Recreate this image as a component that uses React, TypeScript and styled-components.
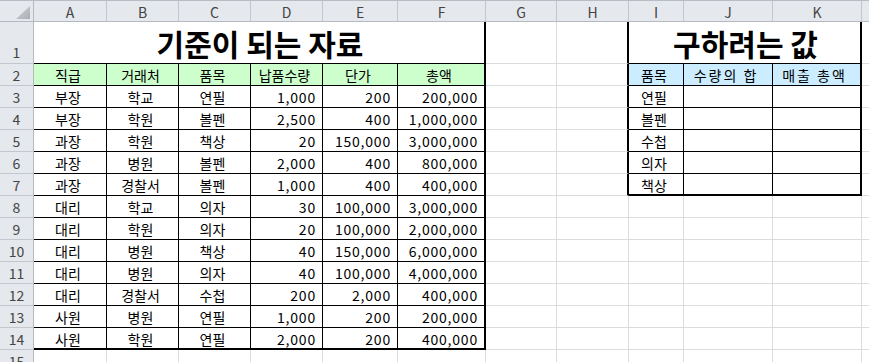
import React from "react";
import styled, { createGlobalStyle } from "styled-components";

const GlobalStyle = createGlobalStyle`
  html, body {
    margin: 0;
    padding: 0;
    background: #ffffff;
    overflow: hidden;
  }
  body {
    font-family: "Noto Sans CJK KR", "Noto Sans", sans-serif;
  }
`;

type Edge = "grid" | "thin" | "thick";
type Align = "left" | "center" | "right";

const edge = (e: Edge) =>
  e === "thick" ? "2px solid #000" : e === "thin" ? "1px solid #000" : "1px solid #dadcdd";

const Frame = styled.div`
  width: 869px;
  height: 362px;
  overflow: hidden;
  display: flex;
  flex-direction: column;
`;

const TopStrip = styled.div`
  height: 3px;
  box-sizing: border-box;
  background: #d3d6da;
  border-bottom: 1px solid #b9bdc3;
`;

const Sheet = styled.div`
  display: grid;
  grid-template-columns: 34px 73px 72px 72px 72px 75px 88px 71px 72px 55px 89px 89px 1fr;
  grid-template-rows: 21px 42px repeat(14, 22px);
`;

const Corner = styled.div`
  box-sizing: border-box;
  background: #e5e8ec;
  border-right: 1px solid #b4b9c0;
  border-bottom: 1px solid #b4b9c0;
  display: flex;
  align-items: flex-end;
  justify-content: flex-end;
  padding: 0 3px 2px 0;
`;

const ColHead = styled.div`
  box-sizing: border-box;
  background: #e5e8ec;
  border-right: 1px solid #c3c7cd;
  border-bottom: 1px solid #b4b9c0;
  display: flex;
  align-items: center;
  justify-content: center;
  font-size: 14px;
  line-height: 1;
  color: #444;
  padding-top: 1px;
`;

const RowHead = styled.div<{ $tall?: boolean }>`
  box-sizing: border-box;
  background: #e5e8ec;
  border-right: 1px solid #b4b9c0;
  border-bottom: 1px solid #c3c7cd;
  display: flex;
  align-items: ${(p) => (p.$tall ? "flex-end" : "center")};
  justify-content: center;
  padding-bottom: ${(p) => (p.$tall ? "4px" : "0")};
  font-size: 14px;
  line-height: 1;
  color: #444;
`;

const Cell = styled.div<{
  $right: Edge;
  $bottom: Edge;
  $fill?: string;
  $align?: Align;
  $span?: number;
  $numeric?: boolean;
  $spaced?: boolean;
}>`
  box-sizing: border-box;
  grid-column: span ${(p) => p.$span ?? 1};
  border-right: ${(p) => edge(p.$right)};
  border-bottom: ${(p) => edge(p.$bottom)};
  background: ${(p) => p.$fill ?? "#ffffff"};
  display: flex;
  align-items: center;
  justify-content: ${(p) =>
    p.$align === "right" ? "flex-end" : p.$align === "left" ? "flex-start" : "center"};
  padding: 1px ${(p) => (p.$numeric ? "6px" : "7px")} 0 3px;
  font-size: 14px;
  line-height: 1;
  letter-spacing: ${(p) => (p.$numeric ? "0.8px" : p.$spaced ? "2px" : "0")};
  color: #000;
  white-space: nowrap;
  overflow: hidden;
`;

const TitleCell = styled(Cell)`
  font-size: 30px;
  font-weight: 700;
  padding: 0 0 0 2px;
  letter-spacing: 0;
`;

const CornerMark = () => (
  <svg width="14" height="13" viewBox="0 0 14 13">
    <defs>
      <linearGradient id="cm" x1="0" y1="0" x2="1" y2="1">
        <stop offset="0" stopColor="#d2d5d9" />
        <stop offset="1" stopColor="#a9adb3" />
      </linearGradient>
    </defs>
    <polygon points="14,0 14,13 0,13" fill="url(#cm)" />
  </svg>
);

const LETTERS = ["A", "B", "C", "D", "E", "F", "G", "H", "I", "J", "K", ""];

const GREEN = "#ccffcc";
const BLUE = "#ccecff";

const leftHeader = ["직급", "거래처", "품목", "납품수량", "단가", "총액"];
const leftData: string[][] = [
  ["부장", "학교", "연필", "1,000", "200", "200,000"],
  ["부장", "학원", "볼펜", "2,500", "400", "1,000,000"],
  ["과장", "학원", "책상", "20", "150,000", "3,000,000"],
  ["과장", "병원", "볼펜", "2,000", "400", "800,000"],
  ["과장", "경찰서", "볼펜", "1,000", "400", "400,000"],
  ["대리", "학교", "의자", "30", "100,000", "3,000,000"],
  ["대리", "학원", "의자", "20", "100,000", "2,000,000"],
  ["대리", "병원", "책상", "40", "150,000", "6,000,000"],
  ["대리", "병원", "의자", "40", "100,000", "4,000,000"],
  ["대리", "경찰서", "수첩", "200", "2,000", "400,000"],
  ["사원", "병원", "연필", "1,000", "200", "200,000"],
  ["사원", "학원", "연필", "2,000", "200", "400,000"],
];
const rightHeader = ["품목", "수량의 합", "매출 총액"];
const rightItems = ["연필", "볼펜", "수첩", "의자", "책상"];

// border rules for row r (1-based), column c (1..12)
const rightEdge = (r: number, c: number): Edge => {
  if (c >= 1 && c <= 6 && r <= 14) return c === 6 ? "thick" : "thin";
  if (c === 8 && r <= 7) return "thick";
  if (c >= 9 && c <= 11 && r <= 7) return c === 11 ? "thick" : "thin";
  return "grid";
};
const bottomEdge = (r: number, c: number): Edge => {
  if (c >= 1 && c <= 6 && r <= 14) return r === 14 ? "thick" : "thin";
  if (c >= 9 && c <= 11 && r <= 7) return r === 7 ? "thick" : "thin";
  return "grid";
};

type Content = { text: string; align: Align; fill?: string; numeric?: boolean; spaced?: boolean };

const cellContent = (r: number, c: number): Content => {
  if (r === 2 && c <= 6) return { text: leftHeader[c - 1], align: "center", fill: GREEN };
  if (r >= 3 && r <= 14 && c <= 6) {
    const v = leftData[r - 3][c - 1];
    return c >= 4 ? { text: v, align: "right", numeric: true } : { text: v, align: "center" };
  }
  if (r === 2 && c >= 9 && c <= 11)
    return { text: rightHeader[c - 9], align: "center", fill: BLUE, spaced: c > 9 };
  if (r >= 3 && r <= 7 && c === 9) return { text: rightItems[r - 3], align: "center" };
  return { text: "", align: "center" };
};

export default function App() {
  const rows: React.ReactNode[] = [];

  rows.push(
    <Corner key="corner">
      <CornerMark />
    </Corner>
  );
  LETTERS.forEach((l, i) => rows.push(<ColHead key={`h${i}`}>{l}</ColHead>));

  rows.push(
    <RowHead key="r1" $tall>
      1
    </RowHead>
  );
  rows.push(
    <TitleCell key="t1" $span={6} $right="thick" $bottom="thin">
      기준이 되는 자료
    </TitleCell>
  );
  rows.push(<Cell key="g1" $right={rightEdge(1, 7)} $bottom="grid" />);
  rows.push(<Cell key="h1" $right={rightEdge(1, 8)} $bottom="grid" />);
  rows.push(
    <TitleCell key="t2" $span={3} $right="thick" $bottom="thin">
      구하려는 값
    </TitleCell>
  );
  rows.push(<Cell key="l1" $right="grid" $bottom="grid" />);

  for (let r = 2; r <= 15; r++) {
    rows.push(<RowHead key={`r${r}`}>{r}</RowHead>);
    for (let c = 1; c <= 12; c++) {
      const { text, align, fill, numeric, spaced } = cellContent(r, c);
      rows.push(
        <Cell
          key={`c${r}-${c}`}
          $right={rightEdge(r, c)}
          $bottom={bottomEdge(r, c)}
          $align={align}
          $fill={fill}
          $numeric={numeric}
          $spaced={spaced}
        >
          {text}
        </Cell>
      );
    }
  }

  return (
    <>
      <GlobalStyle />
      <Frame>
        <TopStrip />
        <Sheet>{rows}</Sheet>
      </Frame>
    </>
  );
}
